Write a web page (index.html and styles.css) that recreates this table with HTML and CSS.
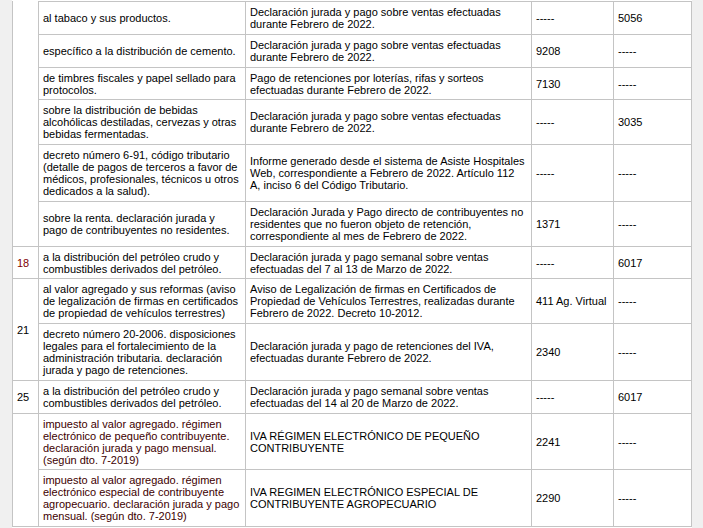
FILE: index.html
```html
<!DOCTYPE html>
<html lang="es">
<head>
<meta charset="utf-8">
<title>Calendario tributario</title>
<link rel="stylesheet" href="styles.css">
</head>
<body>
<div class="wrap">
<table class="cal">
<colgroup>
<col class="c-day"><col class="c-desc"><col class="c-decl"><col class="c-code"><col class="c-alt">
</colgroup>
<tbody>
<tr class="first">
<td class="day cont" rowspan="6"></td>
<td>al tabaco y sus productos.</td>
<td>Declaración jurada y pago sobre ventas efectuadas durante Febrero de 2022.</td>
<td>-----</td>
<td>5056</td>
</tr>
<tr>
<td>específico a la distribución de cemento.</td>
<td>Declaración jurada y pago sobre ventas efectuadas durante Febrero de 2022.</td>
<td>9208</td>
<td>-----</td>
</tr>
<tr>
<td>de timbres fiscales y papel sellado para protocolos.</td>
<td>Pago de retenciones por loterías, rifas y sorteos efectuadas durante Febrero de 2022.</td>
<td>7130</td>
<td>-----</td>
</tr>
<tr>
<td>sobre la distribución de bebidas alcohólicas destiladas, cervezas y otras bebidas fermentadas.</td>
<td>Declaración jurada y pago sobre ventas efectuadas durante Febrero de 2022.</td>
<td>-----</td>
<td>3035</td>
</tr>
<tr>
<td>decreto número 6-91, código tributario (detalle de pagos de terceros a favor de médicos, profesionales, técnicos u otros dedicados a la salud).</td>
<td>Informe generado desde el sistema de Asiste Hospitales Web, correspondiente a Febrero de 2022. Artículo 112 A, inciso 6 del Código Tributario.</td>
<td>-----</td>
<td>-----</td>
</tr>
<tr>
<td>sobre la renta. declaración jurada y pago de contribuyentes no residentes.</td>
<td>Declaración Jurada y Pago directo de contribuyentes no residentes que no fueron objeto de retención, correspondiente al mes de Febrero de 2022.</td>
<td>1371</td>
<td>-----</td>
</tr>
<tr>
<td class="day red">18</td>
<td>a la distribución del petróleo crudo y combustibles derivados del petróleo.</td>
<td>Declaración jurada y pago semanal sobre ventas efectuadas del 7 al 13 de Marzo de 2022.</td>
<td>-----</td>
<td>6017</td>
</tr>
<tr>
<td class="day" rowspan="2">21</td>
<td>al valor agregado y sus reformas (aviso de legalización de firmas en certificados de propiedad de vehículos terrestres)</td>
<td>Aviso de Legalización de firmas en Certificados de Propiedad de Vehículos Terrestres, realizadas durante Febrero de 2022. Decreto 10-2012.</td>
<td>411 Ag. Virtual</td>
<td>-----</td>
</tr>
<tr>
<td>decreto número 20-2006. disposiciones legales para el fortalecimiento de la administración tributaria. declaración jurada y pago de retenciones.</td>
<td>Declaración jurada y pago de retenciones del IVA, efectuadas durante Febrero de 2022.</td>
<td>2340</td>
<td>-----</td>
</tr>
<tr>
<td class="day">25</td>
<td>a la distribución del petróleo crudo y combustibles derivados del petróleo.</td>
<td>Declaración jurada y pago semanal sobre ventas efectuadas del 14 al 20 de Marzo de 2022.</td>
<td>-----</td>
<td>6017</td>
</tr>
<tr>
<td class="day" rowspan="2"></td>
<td class="maroon">impuesto al valor agregado. régimen electrónico de pequeño contribuyente. declaración jurada y pago mensual. (según dto. 7-2019)</td>
<td>IVA RÉGIMEN ELECTRÓNICO DE PEQUEÑO CONTRIBUYENTE</td>
<td>2241</td>
<td>-----</td>
</tr>
<tr>
<td class="maroon">impuesto al valor agregado. régimen electrónico especial de contribuyente agropecuario. declaración jurada y pago mensual. (según dto. 7-2019)</td>
<td>IVA REGIMEN ELECTRÓNICO ESPECIAL DE CONTRIBUYENTE AGROPECUARIO</td>
<td>2290</td>
<td>-----</td>
</tr>
</tbody>
</table>
</div>
</body>
</html>
```

FILE: styles.css
```css
html, body {
  margin: 0;
  padding: 0;
  background: #f0f0f0;
}
body {
  font-family: "Liberation Sans", Arial, sans-serif;
  font-size: 11px;
  line-height: 12px;
  color: #000;
}
.wrap {
  margin-left: 12px;
  width: 680px;
  height: 528px;
  overflow: hidden;
  background: #fff;
  padding-top: 1px;
  box-sizing: border-box;
}
.cal {
  table-layout: fixed;
  width: 680px;
  border-collapse: separate;
  border-spacing: 0;
  border-left: 1px solid #c4c4c4;
}
.c-day { width: 26px; }
.c-desc { width: 207px; }
.c-decl { width: 286px; }
.c-code { width: 82px; }
.c-alt { width: 78px; }
.cal td {
  padding: 4px 4px 3.75px 4px;
  border-right: 1px solid #c4c4c4;
  border-bottom: 1px solid #c4c4c4;
  vertical-align: middle;
  text-align: left;
}
.cal tr.first td {
  border-top: 1px solid #c4c4c4;
}
.cal tr.first td.cont {
  border-top: 0;
}
.red { color: #800000; }
.maroon { color: #3d0000; }
```
